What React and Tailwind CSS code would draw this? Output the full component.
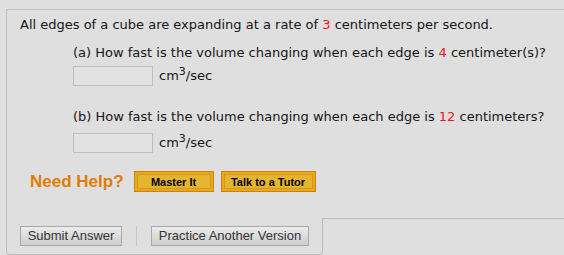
export default function App() {
  const red = "text-[#e8191c]";

  return (
    <div className="w-[564px] h-[255px] overflow-hidden bg-[#dfdfdf] font-['DejaVu_Sans',Verdana,sans-serif] text-[13px] leading-4 text-[#161616]">
      <div className="pt-[9px] pl-[6px]">
        {/* question panel */}
        <div className="border-t border-l border-[#bcbcbc] pl-[13px] pt-[7px] pb-[26px]">
          <p>
            All edges of a cube are expanding at a rate of{" "}
            <span className={red}>3</span> centimeters per second.
          </p>

          <div className="pl-[53px]">
            <p className="mt-[12px]">
              (a) How fast is the volume changing when each edge is{" "}
              <span className={red}>4</span> centimeter(s)?
            </p>
            <div className="flex items-center gap-[6px] mt-[5px]">
              <input className="w-[80px] h-[20px] border border-[#bdbdbd] bg-[#e2e2e2] outline-none" />
              <span>
                cm<sup className="text-[11px]">3</sup>/sec
              </span>
            </div>

            <p className="mt-[23px]">
              (b) How fast is the volume changing when each edge is{" "}
              <span className={red}>12</span> centimeters?
            </p>
            <div className="flex items-center gap-[6px] mt-[8px]">
              <input className="w-[80px] h-[20px] border border-[#bdbdbd] bg-[#e2e2e2] outline-none" />
              <span>
                cm<sup className="text-[11px]">3</sup>/sec
              </span>
            </div>
          </div>

          <div className="flex items-center mt-[18px] pl-[10px] font-['Liberation_Sans',Arial,sans-serif]">
            <span className="text-[17px] font-bold text-[#e07d00] mr-[10px]">
              Need Help?
            </span>
            <button className="w-[80px] h-[21px] border border-[#c3831a] bg-[#f0a712] p-[2px] mr-[7px]">
              <span className="flex items-center justify-center w-full h-full border border-[#c99a2c] bg-[#e6b52e] text-[11px] font-bold text-black">
                Master It
              </span>
            </button>
            <button className="w-[95px] h-[21px] border border-[#c3831a] bg-[#f0a712] p-[2px]">
              <span className="flex items-center justify-center w-full h-full border border-[#c99a2c] bg-[#e6b52e] text-[11px] font-bold text-black">
                Talk to a Tutor
              </span>
            </button>
          </div>
        </div>

        {/* bottom tab with actions */}
        <div className="flex">
          <div className="w-[317px] h-[37px] border-l border-r border-b border-[#bcbcbc] rounded-b-[4px] flex items-start pt-[8px] pl-[13px] font-['Liberation_Sans',Arial,sans-serif]">
            <button className="w-[102px] h-[20px] border border-[#a9a9a9] bg-gradient-to-b from-[#ececec] to-[#cdcdcd] text-[13px] text-[#333]">
              Submit Answer
            </button>
            <div className="w-px h-[20px] bg-[#c6c6c6] mx-[14px]" />
            <button className="w-[158px] h-[20px] border border-[#a9a9a9] bg-gradient-to-b from-[#ececec] to-[#cdcdcd] text-[13px] text-[#333]">
              Practice Another Version
            </button>
          </div>
          <div className="flex-1 border-t border-[#bcbcbc]" />
        </div>
      </div>
    </div>
  );
}
